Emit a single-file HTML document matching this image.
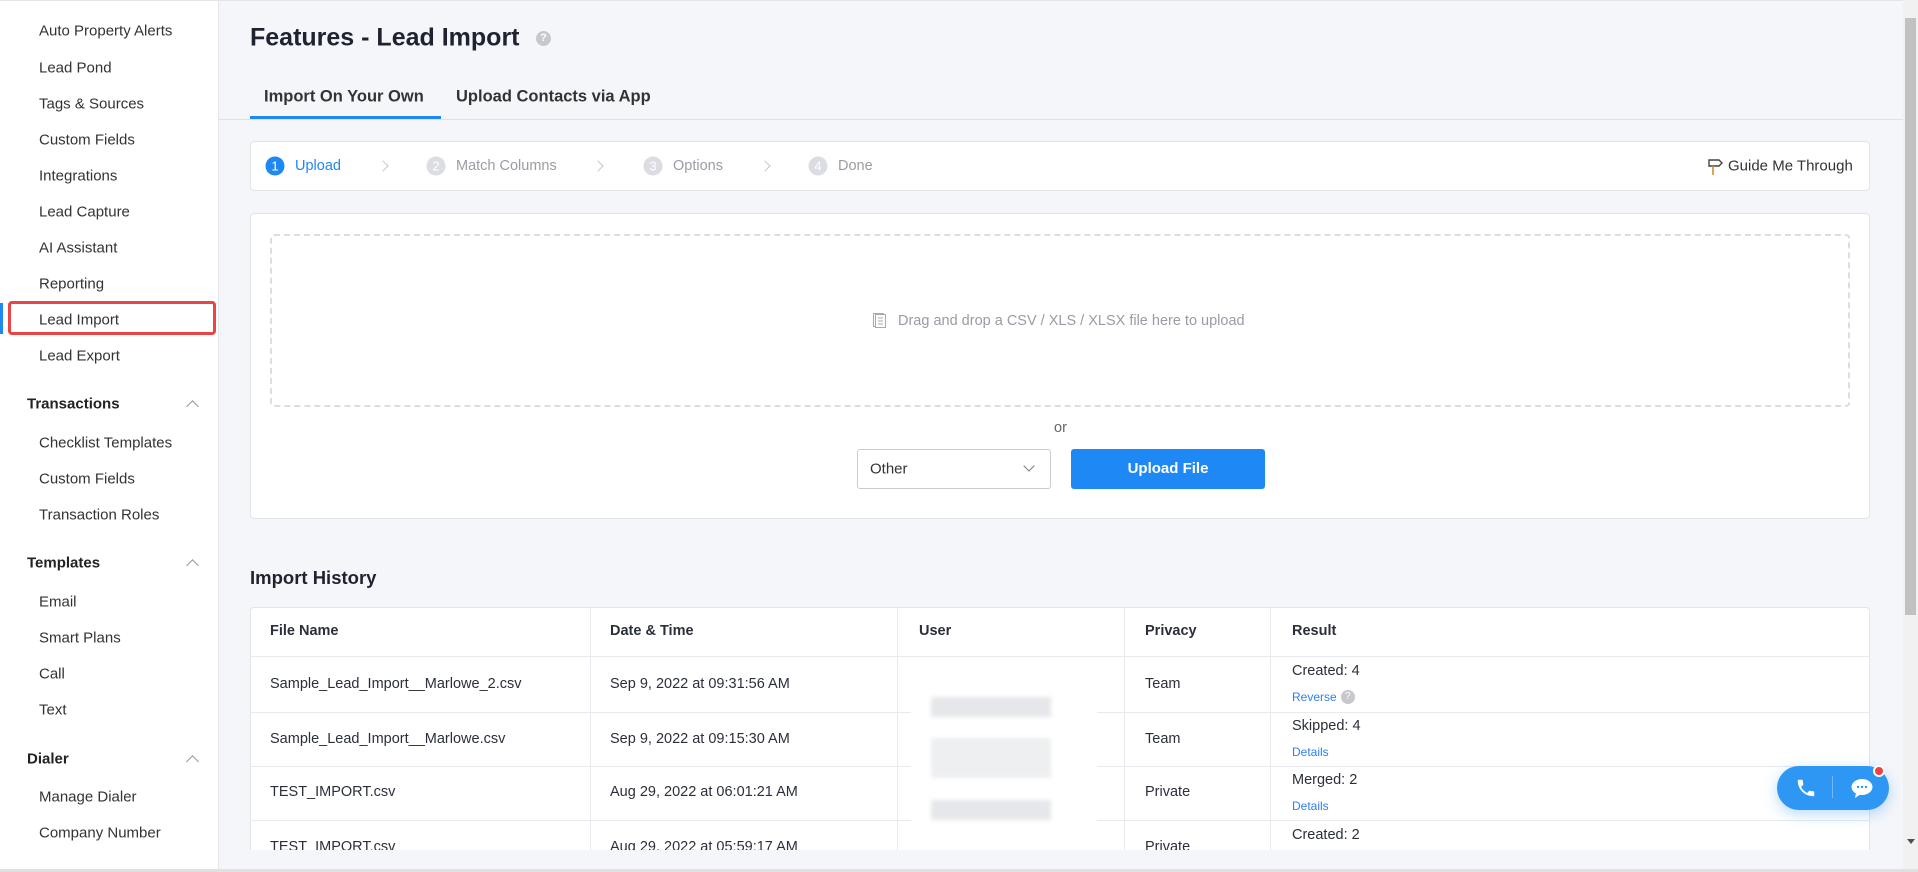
<!DOCTYPE html>
<html><head><meta charset="utf-8"><style>
*{box-sizing:border-box;margin:0;padding:0}
body{width:1918px;height:872px;overflow:hidden;background:#f5f6fa;font-family:"Liberation Sans",Arial,sans-serif;color:#2b2f3a;position:relative}
.abs{position:absolute}
.side{position:absolute;left:0;top:0;width:219px;height:872px;background:#fff;border-right:1px solid #e3e5ea;border-top:1px solid #e3e5ea}
.si{position:absolute;left:39px;font-size:15px;color:#333;transform:translateY(-50%)}
.sh{position:absolute;left:27px;font-size:15px;font-weight:bold;color:#222;transform:translateY(-50%)}
.chev{position:absolute;left:188px;width:9px;height:9px;border-left:1.5px solid #999;border-top:1.5px solid #999;transform:rotate(45deg)}
.card{position:absolute;background:#fff;border:1px solid #e2e4ea;border-radius:4px}
.t{position:absolute;font-size:14.5px;transform:translateY(-50%);white-space:nowrap}
.num{position:absolute;width:19px;height:19px;border-radius:50%;background:#dcdde2;color:#fff;font-size:13px;text-align:center;line-height:19px;transform:translate(-50%,-50%)}
.arr{position:absolute;width:8px;height:8px;border-right:1.5px solid #c4c6cc;border-top:1.5px solid #c4c6cc;transform:rotate(45deg)}
.vl{position:absolute;top:607px;width:1px;height:243px;background:#e8e9ee}
.hl{position:absolute;left:250px;width:1620px;height:1px;background:#e8e9ee}
.lnk{color:#2d7ff2;font-size:12px}
</style></head><body>
<div class="side">
<div class="si" style="top:30px">Auto Property Alerts</div>
<div class="si" style="top:67px">Lead Pond</div>
<div class="si" style="top:103px">Tags &amp; Sources</div>
<div class="si" style="top:139px">Custom Fields</div>
<div class="si" style="top:175px">Integrations</div>
<div class="si" style="top:211px">Lead Capture</div>
<div class="si" style="top:247px">AI Assistant</div>
<div class="si" style="top:283px">Reporting</div>
<div class="abs" style="left:0;top:302px;width:3px;height:31px;background:#1e88f5"></div>
<div class="abs" style="left:8px;top:300px;width:208px;height:34px;border:3px solid #e84545;border-radius:4px"></div>
<div class="si" style="top:319px">Lead Import</div>
<div class="si" style="top:355px">Lead Export</div>
<div class="sh" style="top:403px">Transactions</div><div class="chev" style="top:401px"></div>
<div class="si" style="top:442px">Checklist Templates</div>
<div class="si" style="top:478px">Custom Fields</div>
<div class="si" style="top:514px">Transaction Roles</div>
<div class="sh" style="top:562px">Templates</div><div class="chev" style="top:560px"></div>
<div class="si" style="top:601px">Email</div>
<div class="si" style="top:637px">Smart Plans</div>
<div class="si" style="top:673px">Call</div>
<div class="si" style="top:709px">Text</div>
<div class="sh" style="top:758px">Dialer</div><div class="chev" style="top:756px"></div>
<div class="si" style="top:796px">Manage Dialer</div>
<div class="si" style="top:832px">Company Number</div>
</div>
<div class="abs" style="left:219px;top:0;width:1684px;height:1px;background:#e3e5ea"></div>
<div class="t" style="left:250px;top:38px;font-size:25px;font-weight:bold;color:#1f2330">Features - Lead Import</div>
<div class="abs" style="left:536px;top:31px;width:15px;height:15px;border-radius:50%;background:#c6c8ce;color:#fff;font-size:11px;text-align:center;line-height:15px;font-weight:bold">?</div>
<div class="t" style="left:264px;top:97px;font-size:16.5px;font-weight:bold;color:#333">Import On Your Own</div>
<div class="t" style="left:456px;top:97px;font-size:16.5px;font-weight:bold;color:#333">Upload Contacts via App</div>
<div class="abs" style="left:219px;top:119px;width:1684px;height:1px;background:#dfe1e6"></div>
<div class="abs" style="left:250px;top:116px;width:191px;height:3px;background:#1e88f5"></div>

<div class="card" style="left:250px;top:141px;width:1620px;height:50px"></div>
<div class="num" style="left:275px;top:166px;background:#1e88f5">1</div>
<div class="t" style="left:295px;top:166px;color:#1e88f5">Upload</div>
<div class="arr" style="left:379px;top:162px"></div>
<div class="num" style="left:436px;top:166px">2</div>
<div class="t" style="left:456px;top:166px;color:#9a9ca5">Match Columns</div>
<div class="arr" style="left:594px;top:162px"></div>
<div class="num" style="left:653px;top:166px">3</div>
<div class="t" style="left:673px;top:166px;color:#9a9ca5">Options</div>
<div class="arr" style="left:761px;top:162px"></div>
<div class="num" style="left:818px;top:166px">4</div>
<div class="t" style="left:838px;top:166px;color:#9a9ca5">Done</div>
<svg class="abs" style="left:1707px;top:158px" width="16" height="18" viewBox="0 0 16 18"><path d="M2 2h10l3 3-3 3H2z M6 8v9" fill="none" stroke="#444" stroke-width="1.4"/><path d="M6 8v9" stroke="#e8a13a" stroke-width="1.4"/></svg>
<div class="t" style="left:1728px;top:166px;color:#333;font-size:15px">Guide Me Through</div>

<div class="card" style="left:250px;top:213px;width:1620px;height:306px"></div>
<div class="abs" style="left:270px;top:234px;width:1580px;height:173px;border:2px dashed #dcdde2;border-radius:4px"></div>
<svg class="abs" style="left:873px;top:313px" width="13" height="15" viewBox="0 0 13 15"><rect x="0.5" y="0.5" width="10" height="13" fill="none" stroke="#aaa"/><rect x="2.5" y="1.5" width="10" height="13" fill="#fff" stroke="#aaa"/><path d="M5 5h5M5 8h5M5 11h5" stroke="#aaa"/></svg>
<div class="t" style="left:898px;top:321px;color:#9a9ca5;font-size:14.5px">Drag and drop a CSV / XLS / XLSX file here to upload</div>
<div class="t" style="left:1054px;top:428px;color:#666;font-size:14.5px">or</div>
<div class="abs" style="left:857px;top:449px;width:194px;height:40px;border:1px solid #c9cbd1;border-radius:3px;background:#fff"></div>
<div class="t" style="left:870px;top:469px;font-size:15px;color:#333">Other</div>
<div class="abs" style="left:1025px;top:462px;width:8px;height:8px;border-right:1.3px solid #777;border-bottom:1.3px solid #777;transform:rotate(45deg)"></div>
<div class="abs" style="left:1071px;top:449px;width:194px;height:40px;background:#1e88f5;border-radius:3px;color:#fff;font-size:15px;font-weight:bold;text-align:center;line-height:40px">Upload File</div>

<div class="t" style="left:250px;top:578px;font-size:18.5px;font-weight:bold;color:#1f2330">Import History</div>
<div class="abs" style="left:250px;top:607px;width:1620px;height:250px;background:#fff;border:1px solid #e2e4ea;border-radius:4px 4px 0 0"></div>
<div class="hl" style="top:656px"></div><div class="hl" style="top:712px"></div><div class="hl" style="top:766px"></div><div class="hl" style="top:820px"></div>
<div class="vl" style="left:590px"></div><div class="vl" style="left:897px"></div><div class="vl" style="left:1124px"></div><div class="vl" style="left:1270px"></div>
<div class="t" style="left:270px;top:631px;font-weight:bold;font-size:14.5px">File Name</div>
<div class="t" style="left:610px;top:631px;font-weight:bold;font-size:14.5px">Date &amp; Time</div>
<div class="t" style="left:919px;top:631px;font-weight:bold;font-size:14.5px">User</div>
<div class="t" style="left:1145px;top:631px;font-weight:bold;font-size:14.5px">Privacy</div>
<div class="t" style="left:1292px;top:631px;font-weight:bold;font-size:14.5px">Result</div>
<div class="t" style="left:270px;top:684px">Sample_Lead_Import__Marlowe_2.csv</div>
<div class="t" style="left:610px;top:684px">Sep 9, 2022 at 09:31:56 AM</div>
<div class="t" style="left:1145px;top:684px">Team</div>
<div class="t" style="left:1292px;top:671px">Created: 4</div>
<div class="t" style="left:1292px;top:697px"><span class="lnk">Reverse</span> <span style="display:inline-block;width:14px;height:14px;border-radius:50%;background:#c6c8ce;color:#fff;font-size:10px;text-align:center;line-height:14px;vertical-align:middle">?</span></div>
<div class="t" style="left:270px;top:739px">Sample_Lead_Import__Marlowe.csv</div>
<div class="t" style="left:610px;top:739px">Sep 9, 2022 at 09:15:30 AM</div>
<div class="t" style="left:1145px;top:739px">Team</div>
<div class="t" style="left:1292px;top:726px">Skipped: 4</div>
<div class="t lnk" style="left:1292px;top:752px">Details</div>
<div class="t" style="left:270px;top:792px">TEST_IMPORT.csv</div>
<div class="t" style="left:610px;top:792px">Aug 29, 2022 at 06:01:21 AM</div>
<div class="t" style="left:1145px;top:792px">Private</div>
<div class="t" style="left:1292px;top:780px">Merged: 2</div>
<div class="t lnk" style="left:1292px;top:806px">Details</div>
<div class="t" style="left:270px;top:847px">TEST_IMPORT.csv</div>
<div class="t" style="left:610px;top:847px">Aug 29, 2022 at 05:59:17 AM</div>
<div class="t" style="left:1145px;top:847px">Private</div>
<div class="t" style="left:1292px;top:835px">Created: 2</div>
<div class="abs" style="left:911px;top:668px;width:186px;height:186px;background:#fff"></div>
<div class="abs" style="left:931px;top:697px;width:120px;height:20px;background:#e6e7ea;filter:blur(2px)"></div>
<div class="abs" style="left:931px;top:738px;width:120px;height:40px;background:#eeeff1;filter:blur(2px)"></div>
<div class="abs" style="left:931px;top:800px;width:120px;height:20px;background:#e6e7ea;filter:blur(2px)"></div>
<div class="abs" style="left:219px;top:850px;width:1684px;height:22px;background:#f5f6fa"></div>
<div class="abs" style="left:0;top:869px;width:1918px;height:3px;background:#e0e0e0"></div>

<div class="abs" style="left:1777px;top:766px;width:112px;height:44px;border-radius:22px;background:#2e96f3;box-shadow:0 4px 14px rgba(46,150,243,.35)"></div>
<div class="abs" style="left:1832px;top:776px;width:1px;height:22px;background:rgba(255,255,255,.35)"></div>
<svg class="abs" style="left:1795px;top:777px" width="22" height="22" viewBox="0 0 24 24"><path d="M6.6 10.8c1.4 2.8 3.8 5.1 6.6 6.6l2.2-2.2c.3-.3.7-.4 1-.2 1.1.4 2.3.6 3.6.6.6 0 1 .4 1 1V20c0 .6-.4 1-1 1C10.6 21 3 13.4 3 4c0-.6.4-1 1-1h3.5c.6 0 1 .4 1 1 0 1.3.2 2.5.6 3.6.1.3 0 .7-.2 1z" fill="#fff"/></svg>
<svg class="abs" style="left:1850px;top:777px" width="24" height="22" viewBox="0 0 24 22"><ellipse cx="12" cy="10" rx="10.5" ry="8" fill="#fff"/><path d="M6 16l-1 5 6-4z" fill="#fff"/><circle cx="8" cy="10" r="1.2" fill="#2e96f3"/><circle cx="12" cy="10" r="1.2" fill="#2e96f3"/><circle cx="16" cy="10" r="1.2" fill="#2e96f3"/></svg>
<div class="abs" style="left:1873px;top:765px;width:12px;height:12px;border-radius:50%;background:#f04040;border:2px solid #fff"></div>

<div class="abs" style="left:1903px;top:0;width:15px;height:869px;background:#f1f1f1"></div>
<div class="abs" style="left:1905px;top:18px;width:11px;height:597px;background:#c1c1c1"></div>
<div class="abs" style="left:1907px;top:839px;width:0;height:0;border-left:4px solid transparent;border-right:4px solid transparent;border-top:5px solid #505050"></div>
</body></html>
